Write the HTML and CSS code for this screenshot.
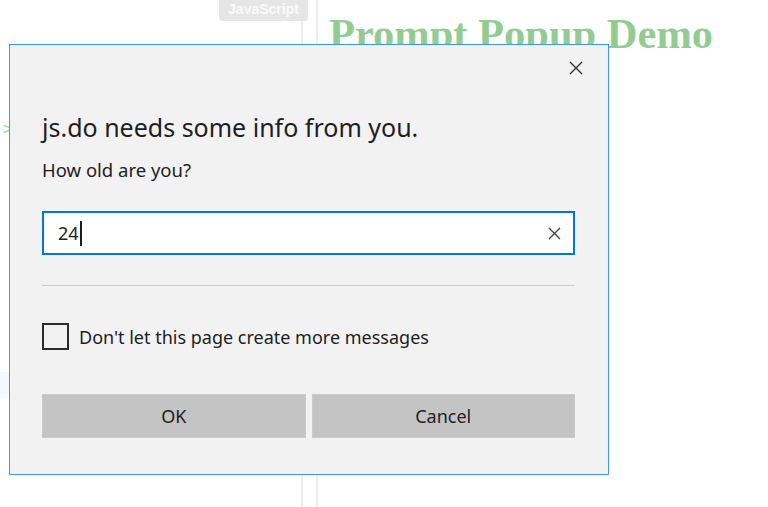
FILE: index.html
```html
<!DOCTYPE html>
<html lang="en">
<head>
    <meta charset="UTF-8">
    <title>Prompt Popup Demo</title>
    <link rel="stylesheet" href="styles.css">
</head>
<body>
    <div class="page">
        <div class="editor">
            <span class="lang-tag">JavaScript</span>
            <span class="arrow">&gt;</span>
            <div class="editor-row"></div>
        </div>
        <div class="gutter"></div>
        <div class="preview">
            <h1>Prompt Popup Demo</h1>
        </div>
    </div>

    <div class="dialog">
        <div class="dialog-head">
            <button class="close-btn" aria-label="Close">
                <svg width="14" height="14" viewBox="0 0 14 14"><path d="M1 1L13 13M13 1L1 13" stroke="#333" stroke-width="1.4"/></svg>
            </button>
        </div>
        <h2 class="dialog-title">js.do needs some info from you.</h2>
        <p class="dialog-msg">How old are you?</p>
        <div class="field">
            <span class="field-value">24</span><span class="caret"></span>
            <svg class="field-clear" width="13" height="13" viewBox="0 0 13 13"><path d="M1 1L12 12M12 1L1 12" stroke="#444" stroke-width="1.4"/></svg>
        </div>
        <hr class="sep">
        <label class="check-row">
            <span class="check-box"></span>
            <span>Don't let this page create more messages</span>
        </label>
        <div class="buttons">
            <button class="dlg-btn">OK</button>
            <button class="dlg-btn">Cancel</button>
        </div>
    </div>
</body>
</html>
```

FILE: styles.css
```css
body {
    margin: 0;
    background-color: #ffffff;
    font-family: "Noto Sans", sans-serif;
    overflow: hidden;
}
.page {
    display: flex;
    height: 507px;
}
.editor {
    position: relative;
    width: 301px;
    border-right: 2px solid #ececec;
}
.lang-tag {
    position: absolute;
    top: 0;
    right: -7px;
    width: 89px;
    height: 21px;
    line-height: 19px;
    text-align: center;
    background-color: #e6e6e6;
    color: #fafafa;
    font-family: "Liberation Sans", Arial, sans-serif;
    font-weight: bold;
    font-size: 14px;
    border-radius: 0 0 4px 4px;
}
.arrow {
    position: absolute;
    top: 120px;
    left: 2px;
    color: #a6d3a6;
    font-family: "DejaVu Sans", sans-serif;
    font-size: 15px;
}
.editor-row {
    margin-top: 372px;
    height: 26px;
    background-color: #f5f8fc;
}
.gutter {
    width: 13px;
    border-right: 2px solid #ececec;
}
.preview {
    flex: 1;
    padding-left: 11px;
}
h1 {
    margin: 10px 0 0;
    font-family: "Liberation Serif", "Times New Roman", serif;
    font-size: 42.5px;
    font-weight: bold;
    color: #93cc93;
    line-height: 48px;
}
.dialog {
    position: absolute;
    left: 9px;
    top: 44px;
    width: 533px;
    padding: 0 33px 36px 32px;
    background-color: #f2f2f2;
    border: 1px solid #3f97e8;
    color: #1e1e1e;
}
.dialog-head {
    display: flex;
    justify-content: flex-end;
    height: 66px;
}
.close-btn {
    background: none;
    border: none;
    padding: 0;
    margin: 16px -8px 0 0;
    width: 14px;
    height: 14px;
    display: flex;
}
.dialog-title {
    margin: 0;
    font-size: 25px;
    font-weight: normal;
    line-height: 32px;
}
.dialog-msg {
    margin: 14px 0 0;
    font-size: 18.5px;
    line-height: 26px;
}
.field {
    margin-top: 28px;
    height: 40px;
    background-color: #ffffff;
    border: 2px solid #0078d7;
    display: flex;
    align-items: center;
    padding: 0 12px 0 14px;
    font-size: 18px;
}
.field-value {
    color: #1e1e1e;
}
.caret {
    width: 2px;
    height: 25px;
    margin-left: 1px;
    background-color: #1e1e1e;
}
.field-clear {
    margin-left: auto;
}
.sep {
    margin: 30px 0 0;
    border: none;
    border-top: 1px solid #cccccc;
}
.check-row {
    display: flex;
    align-items: center;
    gap: 10px;
    margin-top: 37px;
    font-size: 18px;
}
.check-box {
    width: 23px;
    height: 23px;
    border: 2px solid #2b2b2b;
}
.buttons {
    display: flex;
    gap: 6px;
    margin-top: 44px;
}
.dlg-btn {
    flex: 1;
    height: 44px;
    background-color: #c4c4c4;
    border: 1px solid #cbcbcb;
    color: #222222;
    font-family: "Noto Sans", sans-serif;
    font-size: 18px;
    padding: 0;
}
```
